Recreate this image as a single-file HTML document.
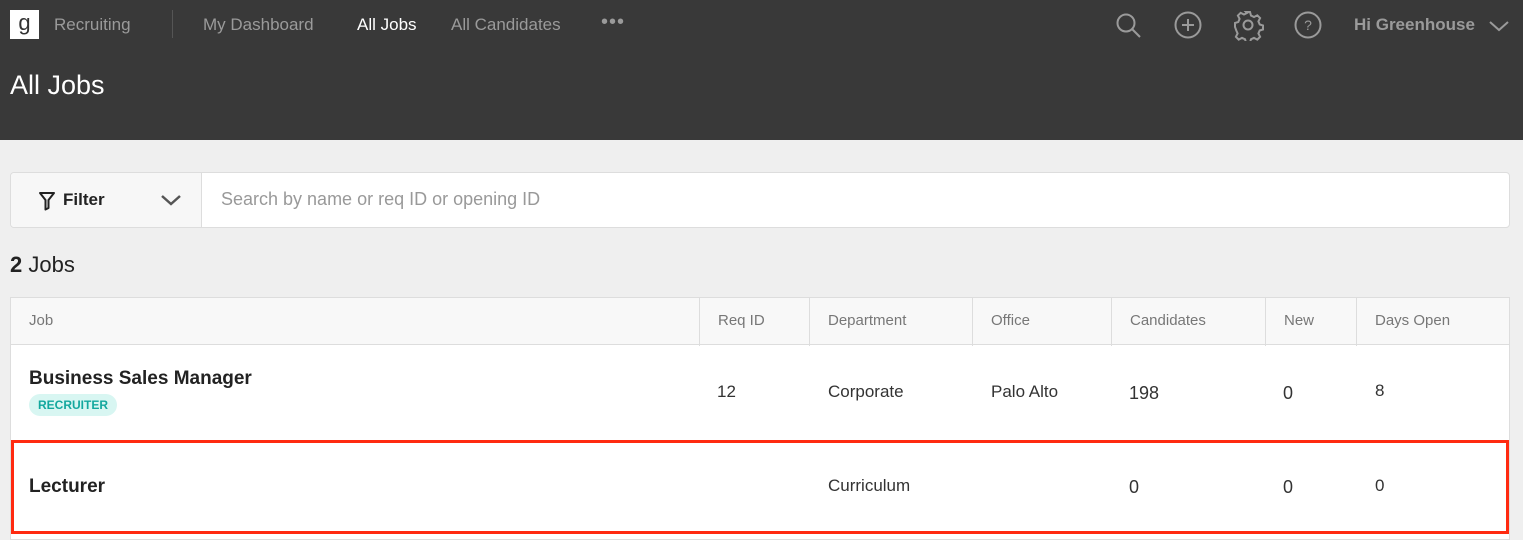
<!DOCTYPE html>
<html><head><style>
*{margin:0;padding:0;box-sizing:border-box}
body{width:1523px;height:540px;background:#efefef;font-family:"Liberation Sans",sans-serif;position:relative;overflow:hidden;color:#222}
.a{position:absolute;white-space:nowrap}
.top{position:absolute;left:0;top:0;width:1523px;height:140px;background:#393939}
.nav{color:#9a9a9a;font-size:17px;top:15px}
.th{color:#777;font-size:15px;top:312px}
.td{color:#333;font-size:17px}
.vl{position:absolute;top:297px;width:1px;height:49px;background:#ddd}
</style></head><body>
<div class="top"></div>
<div class="a" style="left:10px;top:10px;width:29px;height:29px;background:#fff;color:#333;font-size:22px;text-align:center;line-height:25px">g</div>
<div class="a nav" style="left:54px">Recruiting</div>
<div class="a" style="left:172px;top:10px;width:1px;height:28px;background:#555"></div>
<div class="a nav" style="left:203px">My Dashboard</div>
<div class="a nav" style="left:357px;color:#fff">All Jobs</div>
<div class="a nav" style="left:451px">All Candidates</div>
<div class="a nav" style="left:601px;top:11px;font-size:20px;letter-spacing:1px">•••</div>
<svg class="a" style="left:1112px;top:9px" width="32" height="32" viewBox="0 0 32 32" fill="none" stroke="#9a9a9a" stroke-width="2"><circle cx="14" cy="14" r="8.5"/><path d="M20 20l8 8"/></svg>
<svg class="a" style="left:1172px;top:9px" width="32" height="32" viewBox="0 0 32 32" fill="none" stroke="#9a9a9a" stroke-width="2"><circle cx="16" cy="16" r="12.5"/><path d="M16 10v12M10 16h12"/></svg>
<svg class="a" style="left:1232px;top:9px" width="32" height="32" viewBox="0 0 32 32" fill="none" stroke="#9a9a9a" stroke-width="2"><circle cx="16" cy="16" r="4.5"/><path d="M14 3h4l1 3.5 3 1.5 3.3-1.7 2.8 2.8-1.7 3.3 1.3 3 3.3 1.1v4l-3.3 1-1.3 3 1.7 3.3-2.8 2.8-3.3-1.7-3 1.3-1 3.3h-4l-1-3.3-3-1.3-3.3 1.7-2.8-2.8 1.7-3.3-1.3-3L3 18v-4l3.3-1.1 1.3-3-1.7-3.3 2.8-2.8 3.3 1.7 3-1.5z"/></svg>
<svg class="a" style="left:1292px;top:9px" width="32" height="32" viewBox="0 0 32 32" fill="none" stroke="#9a9a9a" stroke-width="2"><circle cx="16" cy="16" r="12.5"/><text x="16" y="21" text-anchor="middle" font-size="14" fill="#9a9a9a" stroke="none" font-family="Liberation Sans">?</text></svg>
<div class="a nav" style="left:1354px;font-weight:bold">Hi Greenhouse</div>
<svg class="a" style="left:1488px;top:18px" width="22" height="16" viewBox="0 0 22 16" fill="none" stroke="#9a9a9a" stroke-width="2"><path d="M2 4l9 8 9-8"/></svg>
<div class="a" style="left:10px;top:70px;color:#fff;font-size:27px">All Jobs</div>

<div class="a" style="left:10px;top:172px;width:1500px;height:56px;background:#fff;border:1px solid #ddd;border-radius:4px"></div>
<div class="a" style="left:11px;top:173px;width:191px;height:54px;background:#f7f7f7;border-right:1px solid #ddd;border-radius:4px 0 0 4px"></div>
<svg class="a" style="left:38px;top:191px" width="18" height="20" viewBox="0 0 18 20" fill="none" stroke="#222" stroke-width="2" stroke-linejoin="round"><path d="M2 2h14l-5.5 7v8l-3 1.5V9z"/></svg>
<div class="a" style="left:63px;top:190px;font-size:17px;font-weight:bold;color:#222">Filter</div>
<svg class="a" style="left:159px;top:191px" width="24" height="18" viewBox="0 0 24 18" fill="none" stroke="#555" stroke-width="2.5"><path d="M3 5l9 8 9-8"/></svg>
<div class="a" style="left:221px;top:189px;font-size:18px;color:#999">Search by name or req ID or opening ID</div>

<div class="a" style="left:10px;top:252px;font-size:22px;color:#222"><b>2</b> Jobs</div>

<div class="a" style="left:10px;top:297px;width:1500px;height:243px;background:#fff;border:1px solid #ddd"></div>
<div class="a" style="left:11px;top:298px;width:1498px;height:47px;background:#f8f8f8;border-bottom:1px solid #ddd"></div>
<div class="vl" style="left:699px"></div><div class="vl" style="left:809px"></div><div class="vl" style="left:972px"></div><div class="vl" style="left:1111px"></div><div class="vl" style="left:1265px"></div><div class="vl" style="left:1356px"></div>
<div class="a th" style="left:29px">Job</div>
<div class="a th" style="left:718px">Req ID</div>
<div class="a th" style="left:828px">Department</div>
<div class="a th" style="left:991px">Office</div>
<div class="a th" style="left:1130px">Candidates</div>
<div class="a th" style="left:1284px">New</div>
<div class="a th" style="left:1375px">Days Open</div>

<div class="a" style="left:29px;top:368px;font-size:19px;font-weight:bold;color:#222">Business Sales Manager</div>
<div class="a" style="left:29px;top:394px;height:22px;padding:0 9px;background:#d8f6f2;color:#13a89e;border-radius:11px;font-size:12px;font-weight:bold;line-height:22px">RECRUITER</div>
<div class="a td" style="left:717px;top:382px">12</div>
<div class="a td" style="left:828px;top:382px">Corporate</div>
<div class="a td" style="left:991px;top:382px">Palo Alto</div>
<div class="a td" style="left:1129px;top:383px;font-size:18px">198</div>
<div class="a td" style="left:1283px;top:383px;font-size:18px">0</div>
<div class="a td" style="left:1375px;top:381px">8</div>

<div class="a" style="left:11px;top:440px;width:1498px;height:94px;border:3px solid #ff2a10"></div>
<div class="a" style="left:29px;top:476px;font-size:19px;font-weight:bold;color:#222">Lecturer</div>
<div class="a td" style="left:828px;top:476px">Curriculum</div>
<div class="a td" style="left:1129px;top:477px;font-size:18px">0</div>
<div class="a td" style="left:1283px;top:477px;font-size:18px">0</div>
<div class="a td" style="left:1375px;top:476px">0</div>
</body></html>
